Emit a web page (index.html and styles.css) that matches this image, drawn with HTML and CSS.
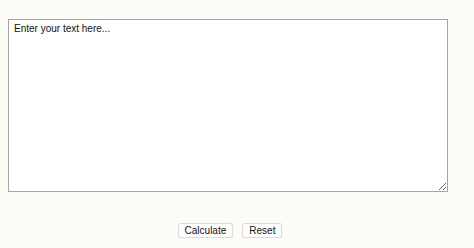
FILE: index.html
```html
<!DOCTYPE html>
<html>
<head>
<meta charset="utf-8">
<link rel="stylesheet" href="styles.css">
</head>
<body>
<div class="wrap">
  <textarea class="input">Enter your text here...</textarea>
  <div class="actions">
    <button class="btn">Calculate</button>
    <button class="btn">Reset</button>
  </div>
</div>
</body>
</html>
```
FILE: styles.css
```css
html, body {
  margin: 0;
  padding: 0;
  background: #fdfdf8;
}
.wrap {
  padding: 19px 0 0 8px;
  width: 440px;
}
.input {
  display: block;
  box-sizing: border-box;
  width: 440px;
  height: 173px;
  margin: 0;
  padding: 3px 5px;
  border: 1px solid #a6a6a6;
  background: #ffffff;
  color: #111;
  font-family: "Liberation Sans", Arial, sans-serif;
  font-size: 10px;
  line-height: 12px;
  resize: both;
  outline: none;
}
.actions {
  display: flex;
  justify-content: center;
  gap: 9px;
  margin-top: 31px;
  padding-left: 4px;
}
.btn {
  box-sizing: border-box;
  height: 15px;
  padding: 0 6px;
  border: 1px solid #dcdcdc;
  border-radius: 3px;
  background: #ffffff;
  color: #111;
  font-family: "Liberation Sans", Arial, sans-serif;
  font-size: 10px;
  line-height: 13px;
  box-shadow: 0 0.5px 1px rgba(0,0,0,0.12);
}
```
